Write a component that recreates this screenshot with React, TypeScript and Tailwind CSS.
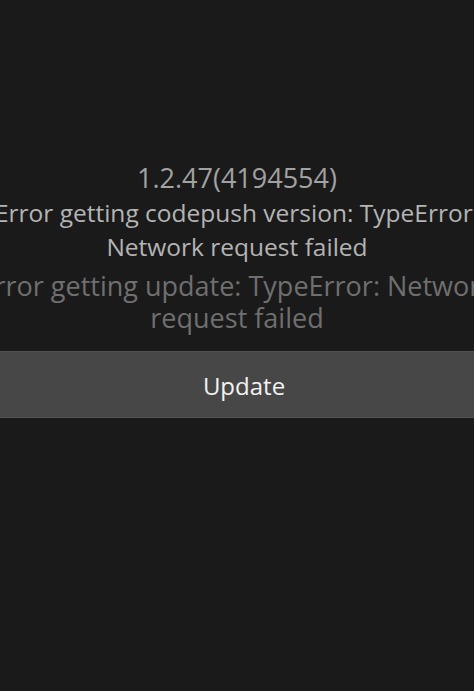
export default function App() {
  return (
    <div
      className="flex min-h-[691px] w-full flex-col items-center overflow-hidden bg-[#1a1a1a] pt-[161px]"
      style={{ fontFamily: '"Open Sans", "Noto Sans", sans-serif' }}
    >
      <p className="shrink-0 whitespace-nowrap text-center text-[27px] leading-[34px] text-[#a2a2a2]">
        1.2.47(4194554)
      </p>
      <p className="mt-px shrink-0 whitespace-nowrap text-center text-[24.5px] leading-[34px] text-[#b4b4b4]">
        Error getting codepush version: TypeError:
        <br />
        Network request failed
      </p>
      <p className="mt-[6px] shrink-0 whitespace-nowrap text-center text-[27px] leading-[32px] text-[#6f6f6f]">
        Error getting update: TypeError: Network
        <br />
        request failed
      </p>
      <button
        type="button"
        className="mt-[17px] flex h-[67px] w-full items-center justify-center border-y border-[#525252] bg-[#474747] pl-[14px] pt-[3px] text-[24px] font-medium text-[#f2f2f2]"
      >
        Update
      </button>
    </div>
  )
}
